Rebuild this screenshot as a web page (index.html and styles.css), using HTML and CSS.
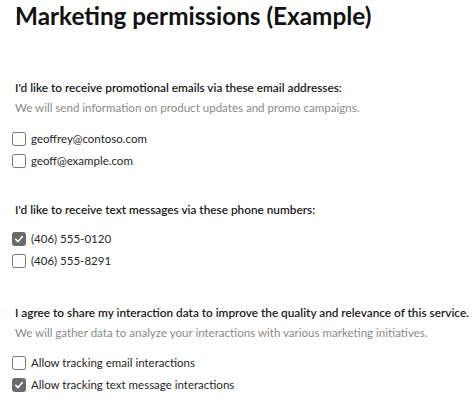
FILE: index.html
```html
<!DOCTYPE html>
<html lang="en">
<head>
<meta charset="utf-8">
<title>Marketing permissions (Example)</title>
<link rel="stylesheet" href="styles.css">
</head>
<body>
<main class="page">
  <h1 class="title">Marketing permissions (Example)</h1>

  <section class="group group-first">
    <h2 class="group-heading">I'd like to receive promotional emails via these email addresses:</h2>
    <p class="group-desc">We will send information on product updates and promo campaigns.</p>
    <ul class="options">
      <li class="option"><span class="box"></span><span class="label">geoffrey@contoso.com</span></li>
      <li class="option"><span class="box"></span><span class="label">geoff@example.com</span></li>
    </ul>
  </section>

  <section class="group">
    <h2 class="group-heading">I'd like to receive text messages via these phone numbers:</h2>
    <ul class="options options-tight">
      <li class="option"><span class="box box-checked"><svg viewBox="0 0 14 14" class="check"><path d="M3.2 7.4 L5.9 10 L10.9 4.2" /></svg></span><span class="label">(406) 555-0120</span></li>
      <li class="option"><span class="box"></span><span class="label">(406) 555-8291</span></li>
    </ul>
  </section>

  <section class="group group-last">
    <h2 class="group-heading">I agree to share my interaction data to improve the quality and relevance of this service.</h2>
    <p class="group-desc">We will gather data to analyze your interactions with various marketing initiatives.</p>
    <ul class="options options-last">
      <li class="option"><span class="box"></span><span class="label">Allow tracking email interactions</span></li>
      <li class="option"><span class="box box-checked"><svg viewBox="0 0 14 14" class="check"><path d="M3.2 7.4 L5.9 10 L10.9 4.2" /></svg></span><span class="label">Allow tracking text message interactions</span></li>
    </ul>
  </section>
</main>
</body>
</html>
```

FILE: styles.css
```css
html, body {
  margin: 0;
  padding: 0;
  background: #ffffff;
}

body {
  font-family: Lato, "Open Sans", "Liberation Sans", sans-serif;
  color: #1f1f1f;
}

.page {
  padding: 0 0 0 15px;
}

.title {
  margin: 0;
  font-size: 24.3px;
  line-height: 32px;
  font-weight: 700;
  color: #111111;
}

.group {
  margin-top: 28px;
}

.group-first {
  margin-top: 46px;
}

.group-last {
  margin-top: 31px;
}

.group-heading {
  margin: 0;
  font-size: 11.8px;
  line-height: 20px;
  font-weight: 600;
  color: #1a1a1a;
  white-space: nowrap;
}

.group-desc {
  margin: 0;
  font-size: 11.55px;
  line-height: 20px;
  color: #8a8a8a;
}

.options {
  list-style: none;
  margin: 10px 0 0 -3px;
  padding: 0;
}

.options-tight {
  margin-top: 8px;
}

.options-last {
  margin-top: 8.5px;
}

.option {
  display: flex;
  align-items: center;
  gap: 5px;
  height: 22px;
}

.box {
  box-sizing: border-box;
  width: 14px;
  height: 14px;
  border: 1.3px solid #767676;
  border-radius: 2.5px;
  background: #ffffff;
  display: flex;
  align-items: center;
  justify-content: center;
  flex: none;
}

.box-checked {
  background: #6b6b6b;
  border-color: #6b6b6b;
}

.check {
  width: 14px;
  height: 14px;
  fill: none;
  stroke: #ffffff;
  stroke-width: 1.8;
  stroke-linecap: round;
  stroke-linejoin: round;
}

.label {
  font-size: 11.5px;
  line-height: 22px;
  color: #262626;
}
```
